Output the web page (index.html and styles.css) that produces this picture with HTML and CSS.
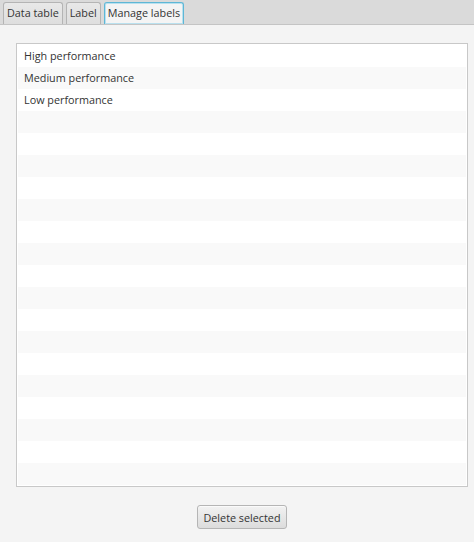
FILE: index.html
```html
<!DOCTYPE html>
<html>
<head>
<meta charset="utf-8">
<link rel="stylesheet" href="styles.css">
</head>
<body>
<div class="window">
  <div class="tab-header">
    <div class="tab">Data table</div>
    <div class="tab">Label</div>
    <div class="tab selected">Manage labels</div>
  </div>
  <div class="content">
    <div class="list">
      <div class="row">High performance</div>
      <div class="row">Medium performance</div>
      <div class="row">Low performance</div>
      <div class="row"></div><div class="row"></div><div class="row"></div><div class="row"></div>
      <div class="row"></div><div class="row"></div><div class="row"></div><div class="row"></div>
      <div class="row"></div><div class="row"></div><div class="row"></div><div class="row"></div>
      <div class="row"></div><div class="row"></div><div class="row"></div><div class="row"></div>
      <div class="row"></div>
    </div>
    <div class="actions">
      <button class="btn">Delete selected</button>
    </div>
  </div>
</div>
</body>
</html>
```
FILE: styles.css
```css
html, body {
  margin: 0;
  padding: 0;
  width: 474px;
  height: 542px;
  overflow: hidden;
  background: #f4f4f4;
}
.window {
  width: 474px;
  height: 542px;
  display: flex;
  flex-direction: column;
  font-family: "Open Sans", "Noto Sans", sans-serif;
  font-size: 10.8px;
  color: #333;
}
.tab-header {
  height: 24px;
  background: #dadada;
  border-bottom: 1px solid #c4c4c4;
  display: flex;
  align-items: flex-end;
  padding-left: 3px;
  gap: 3px;
  box-sizing: content-box;
}
.tab {
  height: 22px;
  box-sizing: border-box;
  padding: 0 3px;
  border: 1px solid #b4b4b4;
  border-bottom: none;
  border-radius: 3px 3px 0 0;
  background: linear-gradient(#e8e8e8, #dedede);
  display: flex;
  align-items: center;
  line-height: 1;
}
.tab.selected {
  background: #f4f4f4;
  border: 1px solid #5eb7d6;
  border-bottom: none;
  box-shadow: inset 0 0 0 1px #b9e0ee;
}
.content {
  flex: 1;
  display: flex;
  flex-direction: column;
  padding: 18px 6px 0 16px;
}
.list {
  height: 444px;
  box-sizing: border-box;
  border: 1px solid #c8c8c8;
  background: #fff;
  padding: 1px;
  overflow: hidden;
}
.row {
  height: 22px;
  line-height: 22px;
  padding-left: 6px;
  background: #fff;
}
.row:nth-child(even) {
  background: #f9f9f9;
}
.actions {
  display: flex;
  justify-content: center;
  padding-top: 18px;
}
.btn {
  width: 90px;
  height: 24px;
  font-family: inherit;
  font-size: 10.8px;
  color: #333;
  border: 1px solid #b5b5b5;
  border-radius: 3px;
  background: linear-gradient(#f2f2f2, #dcdcdc);
  box-shadow: inset 0 1px 0 #fafafa;
  padding: 0;
}
```
